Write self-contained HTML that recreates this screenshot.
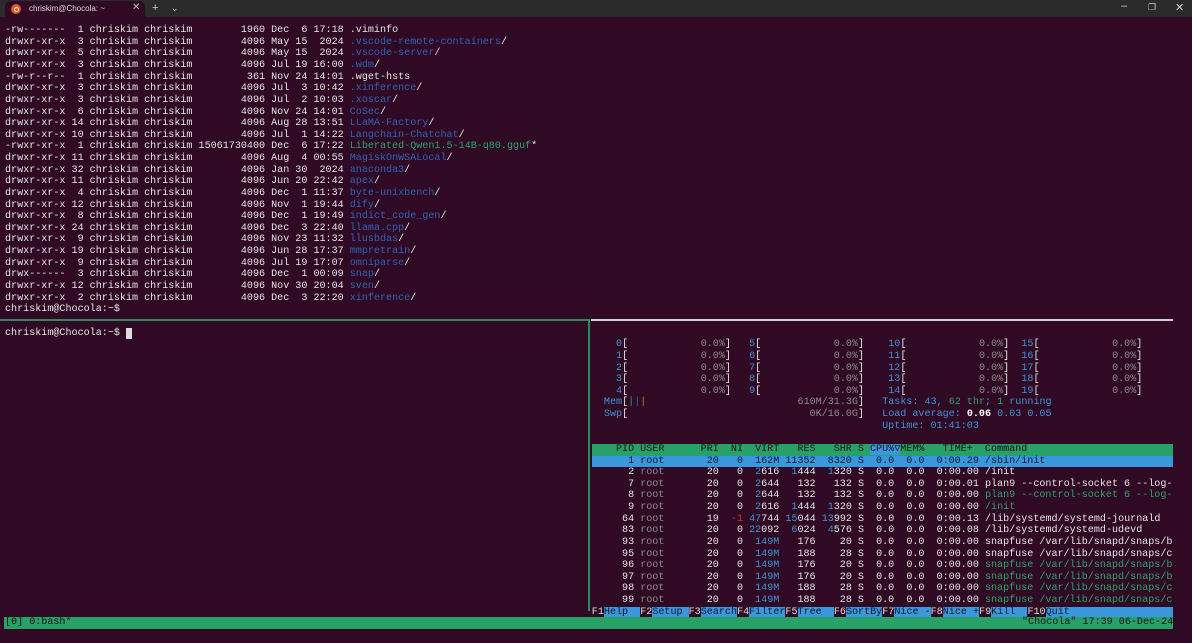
<!DOCTYPE html>
<html><head><meta charset="utf-8"><style>
*{margin:0;padding:0;box-sizing:border-box}
body{width:1192px;height:643px;background:#300a24;overflow:hidden;position:relative;font-family:"Liberation Mono","DejaVu Sans Mono",monospace;}
#bar{position:absolute;left:0;top:0;width:1192px;height:17px;background:#2b2b2b}
#tab{position:absolute;left:5px;top:1px;width:140px;height:17px;background:#300a24;border-radius:6px 6px 0 0}
#tab .ico{position:absolute;left:6px;top:3px;width:10px;height:10px;border-radius:50%;background:#e95420}
#tab .ico:after{content:"";position:absolute;left:2.5px;top:2.5px;width:3px;height:3px;border:1px solid #fff;border-radius:50%}
#tab .t{position:absolute;left:24px;top:3px;font:8px "Liberation Sans",sans-serif;color:#ddd}
#tab .x{position:absolute;left:127px;top:1px;font:10px "Liberation Sans",sans-serif;color:#bbb}
.tb{position:absolute;top:2px;font:11px "Liberation Sans",sans-serif;color:#ccc}
pre{position:absolute;font-family:"Liberation Mono","DejaVu Sans Mono",monospace;font-size:10.08px;line-height:11.625px;color:#e6e6e6;white-space:pre}
.b{color:#2f62b8}.g{color:#2aa56a}.gr{color:#8c8c8c}.c{color:#3f93d6}.w{color:#fff;font-weight:bold}.r{color:#d0302a}.o{color:#c7762a}
.hdr{background:#26a269;color:#111;display:inline-block;width:580.8px}
.sel{background:#3a96dd;color:#0b1a2a;display:inline-block;width:580.8px}
.cp{background:#3a96dd}
.fk{color:#ddd}.fl{background:#3a96dd;color:#0b1a2a}
</style></head><body>
<div id="bar"></div>
<div id="tab"><div class="ico"></div><div class="t">chriskim@Chocola: ~</div><div class="x">✕</div></div>
<div class="tb" style="left:152px">+</div><div class="tb" style="left:171px;font-size:9px;top:3px">⌄</div>
<div class="tb" style="left:1121px;top:0">–</div><div class="tb" style="left:1148px;top:2px;font-size:9px">❐</div><div class="tb" style="left:1175px;top:1px">✕</div>
<pre style="left:5px;top:25.2px">-rw-------  1 chriskim chriskim        1960 Dec  6 17:18 .viminfo
drwxr-xr-x  3 chriskim chriskim        4096 May 15  2024 <span class="b">.vscode-remote-containers</span>/
drwxr-xr-x  5 chriskim chriskim        4096 May 15  2024 <span class="b">.vscode-server</span>/
drwxr-xr-x  3 chriskim chriskim        4096 Jul 19 16:00 <span class="b">.wdm</span>/
-rw-r--r--  1 chriskim chriskim         361 Nov 24 14:01 .wget-hsts
drwxr-xr-x  3 chriskim chriskim        4096 Jul  3 10:42 <span class="b">.xinference</span>/
drwxr-xr-x  3 chriskim chriskim        4096 Jul  2 10:03 <span class="b">.xoscar</span>/
drwxr-xr-x  6 chriskim chriskim        4096 Nov 24 14:01 <span class="b">CoSec</span>/
drwxr-xr-x 14 chriskim chriskim        4096 Aug 28 13:51 <span class="b">LLaMA-Factory</span>/
drwxr-xr-x 10 chriskim chriskim        4096 Jul  1 14:22 <span class="b">Langchain-Chatchat</span>/
-rwxr-xr-x  1 chriskim chriskim 15061730400 Dec  6 17:22 <span class="g">Liberated-Qwen1.5-14B-q80.gguf</span>*
drwxr-xr-x 11 chriskim chriskim        4096 Aug  4 00:55 <span class="b">MagiskOnWSALocal</span>/
drwxr-xr-x 32 chriskim chriskim        4096 Jan 30  2024 <span class="b">anaconda3</span>/
drwxr-xr-x 11 chriskim chriskim        4096 Jun 20 22:42 <span class="b">apex</span>/
drwxr-xr-x  4 chriskim chriskim        4096 Dec  1 11:37 <span class="b">byte-unixbench</span>/
drwxr-xr-x 12 chriskim chriskim        4096 Nov  1 19:44 <span class="b">dify</span>/
drwxr-xr-x  8 chriskim chriskim        4096 Dec  1 19:49 <span class="b">indict_code_gen</span>/
drwxr-xr-x 24 chriskim chriskim        4096 Dec  3 22:40 <span class="b">llama.cpp</span>/
drwxr-xr-x  9 chriskim chriskim        4096 Nov 23 11:32 <span class="b">llusbdas</span>/
drwxr-xr-x 19 chriskim chriskim        4096 Jun 28 17:37 <span class="b">mmpretrain</span>/
drwxr-xr-x  9 chriskim chriskim        4096 Jul 19 17:07 <span class="b">omniparse</span>/
drwx------  3 chriskim chriskim        4096 Dec  1 00:09 <span class="b">snap</span>/
drwxr-xr-x 12 chriskim chriskim        4096 Nov 30 20:04 <span class="b">sven</span>/
drwxr-xr-x  2 chriskim chriskim        4096 Dec  3 22:20 <span class="b">xinference</span>/
chriskim@Chocola:~$</pre>
<div style="position:absolute;left:0;top:319px;width:589px;height:2px;background:#2e8a5a"></div>
<div style="position:absolute;left:591px;top:319px;width:582px;height:2px;background:#d8c8d0"></div>
<div style="position:absolute;left:588px;top:319px;width:2px;height:292px;background:#2e8a5a"></div>
<pre style="left:5px;top:327.7px">chriskim@Chocola:~$ <span style="background:#ddd"> </span></pre>
<pre style="left:591.8px;top:339.3px">    <span class="c">0</span>[            <span class="gr">0.0%</span>]   <span class="c">5</span>[            <span class="gr">0.0%</span>]    <span class="c">10</span>[            <span class="gr">0.0%</span>]  <span class="c">15</span>[            <span class="gr">0.0%</span>]
    <span class="c">1</span>[            <span class="gr">0.0%</span>]   <span class="c">6</span>[            <span class="gr">0.0%</span>]    <span class="c">11</span>[            <span class="gr">0.0%</span>]  <span class="c">16</span>[            <span class="gr">0.0%</span>]
    <span class="c">2</span>[            <span class="gr">0.0%</span>]   <span class="c">7</span>[            <span class="gr">0.0%</span>]    <span class="c">12</span>[            <span class="gr">0.0%</span>]  <span class="c">17</span>[            <span class="gr">0.0%</span>]
    <span class="c">3</span>[            <span class="gr">0.0%</span>]   <span class="c">8</span>[            <span class="gr">0.0%</span>]    <span class="c">13</span>[            <span class="gr">0.0%</span>]  <span class="c">18</span>[            <span class="gr">0.0%</span>]
    <span class="c">4</span>[            <span class="gr">0.0%</span>]   <span class="c">9</span>[            <span class="gr">0.0%</span>]    <span class="c">14</span>[            <span class="gr">0.0%</span>]  <span class="c">19</span>[            <span class="gr">0.0%</span>]
  <span class="c">Mem</span>[<span class="g">|</span><span class="b">|</span><span class="o">|</span>                         <span class="gr">610M/31.3G</span>]   <span class="c">Tasks: 43, </span><span class="g">62 thr</span><span class="c">; </span><span class="g">1</span><span class="c"> running</span>
  <span class="c">Swp</span>[                              <span class="gr">0K/16.0G</span>]   <span class="c">Load average: </span><span class="w">0.06</span> <span class="c">0.03 0.05</span>
                                                <span class="c">Uptime: 01:41:03</span>

<span class="hdr">    PID USER      PRI  NI  VIRT   RES   SHR S <span class="cp">CPU%▽</span>MEM%   TIME+  Command</span>
<span class="sel">      1 root       20   0  162M 11352  8320 S  0.0  0.0  0:00.29 /sbin/init</span>
      2 <span class="gr">root</span>       20   0  <span class="c">2</span>616  <span class="c">1</span>444  <span class="c">1</span>320 S  0.0  0.0  0:00.00 /init
      7 <span class="gr">root</span>       20   0  <span class="c">2</span>644   132   132 S  0.0  0.0  0:00.01 plan9 --control-socket 6 --log-
      8 <span class="gr">root</span>       20   0  <span class="c">2</span>644   132   132 S  0.0  0.0  0:00.00 <span class="g">plan9 --control-socket 6 --log-</span>
      9 <span class="gr">root</span>       20   0  <span class="c">2</span>616  <span class="c">1</span>444  <span class="c">1</span>320 S  0.0  0.0  0:00.00 <span class="g">/init</span>
     64 <span class="gr">root</span>       19  <span class="r">-1</span> <span class="c">47</span>744 <span class="c">15</span>044 <span class="c">13</span>992 S  0.0  0.0  0:00.13 /lib/systemd/systemd-journald
     83 <span class="gr">root</span>       20   0 <span class="c">22</span>092  <span class="c">6</span>024  <span class="c">4</span>576 S  0.0  0.0  0:00.08 /lib/systemd/systemd-udevd
     93 <span class="gr">root</span>       20   0  <span class="c">149M</span>   176    20 S  0.0  0.0  0:00.00 snapfuse /var/lib/snapd/snaps/b
     95 <span class="gr">root</span>       20   0  <span class="c">149M</span>   188    28 S  0.0  0.0  0:00.00 snapfuse /var/lib/snapd/snaps/c
     96 <span class="gr">root</span>       20   0  <span class="c">149M</span>   176    20 S  0.0  0.0  0:00.00 <span class="g">snapfuse /var/lib/snapd/snaps/b</span>
     97 <span class="gr">root</span>       20   0  <span class="c">149M</span>   176    20 S  0.0  0.0  0:00.00 <span class="g">snapfuse /var/lib/snapd/snaps/b</span>
     98 <span class="gr">root</span>       20   0  <span class="c">149M</span>   188    28 S  0.0  0.0  0:00.00 <span class="g">snapfuse /var/lib/snapd/snaps/c</span>
     99 <span class="gr">root</span>       20   0  <span class="c">149M</span>   188    28 S  0.0  0.0  0:00.00 <span class="g">snapfuse /var/lib/snapd/snaps/c</span>
<span class="fk">F1</span><span class="fl">Help  </span><span class="fk">F2</span><span class="fl">Setup </span><span class="fk">F3</span><span class="fl">Search</span><span class="fk">F4</span><span class="fl">Filter</span><span class="fk">F5</span><span class="fl">Tree  </span><span class="fk">F6</span><span class="fl">SortBy</span><span class="fk">F7</span><span class="fl">Nice -</span><span class="fk">F8</span><span class="fl">Nice +</span><span class="fk">F9</span><span class="fl">Kill  </span><span class="fk">F10</span><span class="fl">Quit                 </span></pre>
<div style="position:absolute;left:4px;top:617px;width:1169px;height:11.6px;background:#26a269"></div>
<pre style="left:5px;top:617px;color:#111">[0] 0:bash*</pre>
<pre style="left:1022px;top:617px;color:#111">"Chocola" 17:39 06-Dec-24</pre>
</body></html>
